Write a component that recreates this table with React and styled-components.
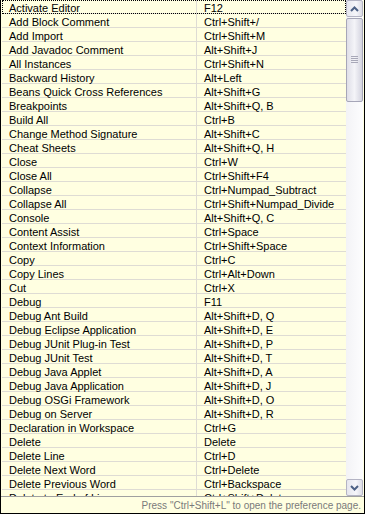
import React from "react";
import styled, { createGlobalStyle } from "styled-components";

const GlobalStyle = createGlobalStyle`
  html, body {
    margin: 0;
    padding: 0;
    background: #ffffe1;
  }
  body {
    font-family: "Liberation Sans", Tahoma, Arial, sans-serif;
  }
`;

const commands = [
  ["Activate Editor", "F12"],
  ["Add Block Comment", "Ctrl+Shift+/"],
  ["Add Import", "Ctrl+Shift+M"],
  ["Add Javadoc Comment", "Alt+Shift+J"],
  ["All Instances", "Ctrl+Shift+N"],
  ["Backward History", "Alt+Left"],
  ["Beans Quick Cross References", "Alt+Shift+G"],
  ["Breakpoints", "Alt+Shift+Q, B"],
  ["Build All", "Ctrl+B"],
  ["Change Method Signature", "Alt+Shift+C"],
  ["Cheat Sheets", "Alt+Shift+Q, H"],
  ["Close", "Ctrl+W"],
  ["Close All", "Ctrl+Shift+F4"],
  ["Collapse", "Ctrl+Numpad_Subtract"],
  ["Collapse All", "Ctrl+Shift+Numpad_Divide"],
  ["Console", "Alt+Shift+Q, C"],
  ["Content Assist", "Ctrl+Space"],
  ["Context Information", "Ctrl+Shift+Space"],
  ["Copy", "Ctrl+C"],
  ["Copy Lines", "Ctrl+Alt+Down"],
  ["Cut", "Ctrl+X"],
  ["Debug", "F11"],
  ["Debug Ant Build", "Alt+Shift+D, Q"],
  ["Debug Eclipse Application", "Alt+Shift+D, E"],
  ["Debug JUnit Plug-in Test", "Alt+Shift+D, P"],
  ["Debug JUnit Test", "Alt+Shift+D, T"],
  ["Debug Java Applet", "Alt+Shift+D, A"],
  ["Debug Java Application", "Alt+Shift+D, J"],
  ["Debug OSGi Framework", "Alt+Shift+D, O"],
  ["Debug on Server", "Alt+Shift+D, R"],
  ["Declaration in Workspace", "Ctrl+G"],
  ["Delete", "Delete"],
  ["Delete Line", "Ctrl+D"],
  ["Delete Next Word", "Ctrl+Delete"],
  ["Delete Previous Word", "Ctrl+Backspace"],
  ["Delete to End of Line", "Ctrl+Shift+Delete"]
];

const Popup = styled.div`
  width: 365px;
  height: 514px;
  box-sizing: border-box;
  border-left: 1px solid #000;
  border-right: 1px solid #000;
  border-bottom: 1px solid #000;
  background: #ffffe1;
  display: flex;
  flex-direction: column;
  overflow: hidden;
`;

const Body = styled.div`
  flex: 1;
  display: flex;
  min-height: 0;
  padding-left: 1px;
`;

const List = styled.div`
  flex: 1;
  overflow: hidden;
  font-size: 11px;
  color: #000;
`;

const Row = styled.div`
  display: grid;
  grid-template-columns: 195px 1fr;
  height: 14px;
  box-sizing: border-box;
  border-bottom: 1px solid #dedcd4;
  outline: ${(p) => (p.$focused ? "1px dotted #000" : "none")};
  outline-offset: -1px;
  padding-top: 2px;
  line-height: 12px;
`;

const Cell = styled.div`
  padding-left: 7px;
  white-space: nowrap;
  overflow: visible;
  border-right: ${(p) => (p.$key ? "none" : "1px solid #dedcd4")};
  margin-top: -2px;
  padding-top: 2px;
`;

const ScrollBar = styled.div`
  width: 17px;
  display: flex;
  flex-direction: column;
  background: linear-gradient(90deg, #f3f3f6, #fdfdfe);
  margin-right: 1px;
`;

const ArrowButton = styled.div`
  height: 17px;
  box-sizing: border-box;
  border: 1px solid #b4b4c4;
  border-radius: 2px;
  background: linear-gradient(90deg, #e6e6ee, #f6f6fa 60%, #dcdce6);
  display: flex;
  align-items: center;
  justify-content: center;
`;

const Thumb = styled.div`
  height: 84px;
  margin: 1px 0;
  box-sizing: border-box;
  border: 1px solid #a6a6b8;
  border-radius: 2px;
  background: linear-gradient(90deg, #dfdfe8, #f4f4f8 50%, #d4d4e0);
  display: flex;
  align-items: center;
  justify-content: center;
`;

const Track = styled.div`
  flex: 1;
`;

const Status = styled.div`
  height: 17px;
  box-sizing: border-box;
  border-top: 1px solid #a0a0a0;
  display: flex;
  align-items: center;
  justify-content: flex-end;
  padding-right: 3px;
  font-size: 10px;
  color: #7a7a7a;
  white-space: nowrap;
`;

function Chevron({ down }) {
  return (
    <svg width="9" height="6" viewBox="0 0 9 6">
      <path
        d={down ? "M1 1 L4.5 4.5 L8 1" : "M1 5 L4.5 1.5 L8 5"}
        fill="none"
        stroke="#4d6185"
        strokeWidth="2"
      />
    </svg>
  );
}

function Grip() {
  return (
    <svg width="7" height="8" viewBox="0 0 7 8">
      {[0, 2, 4, 6].map((y) => (
        <rect key={y} x="0" y={y} width="7" height="1" fill="#a8a8b8" />
      ))}
    </svg>
  );
}

function App() {
  return (
    <>
      <GlobalStyle />
      <Popup>
        <Body>
          <List>
            {commands.map(([name, key], i) => (
              <Row key={name} $focused={i === 0}>
                <Cell>{name}</Cell>
                <Cell $key>{key}</Cell>
              </Row>
            ))}
          </List>
          <ScrollBar>
            <ArrowButton>
              <Chevron />
            </ArrowButton>
            <Thumb>
              <Grip />
            </Thumb>
            <Track />
            <ArrowButton>
              <Chevron down />
            </ArrowButton>
          </ScrollBar>
        </Body>
        <Status>Press "Ctrl+Shift+L" to open the preference page.</Status>
      </Popup>
    </>
  );
}

export default App;
